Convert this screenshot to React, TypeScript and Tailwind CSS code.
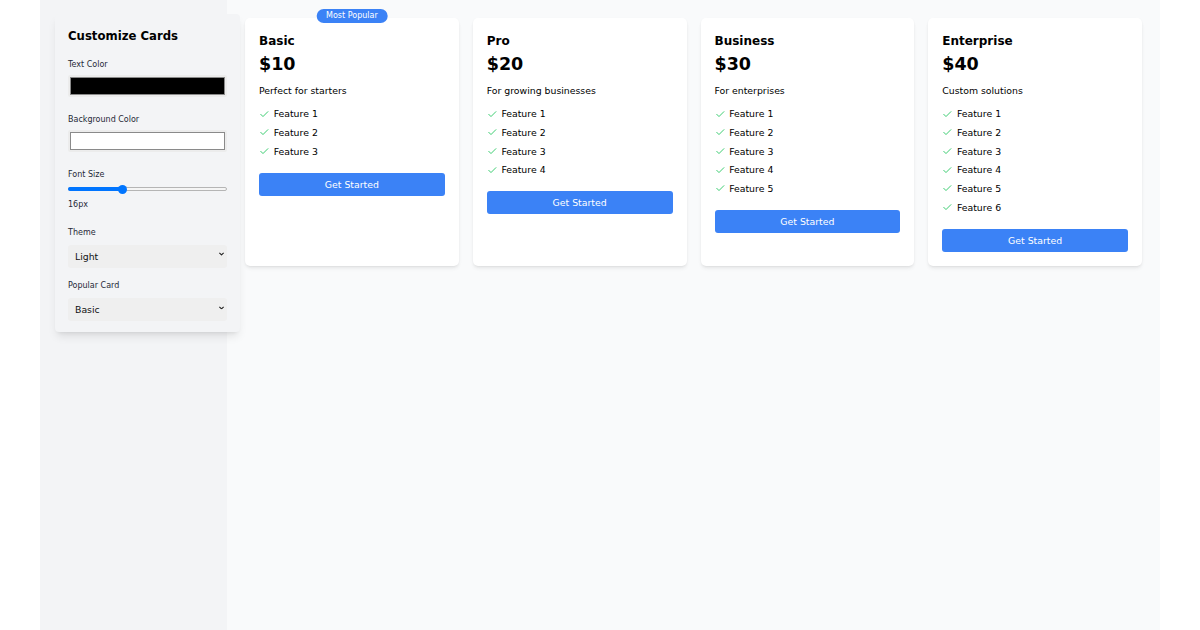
import React, { useState } from "react";

type Plan = { name: string; price: string; desc: string; features: number };

const plans: Plan[] = [
  { name: "Basic", price: "$10", desc: "Perfect for starters", features: 3 },
  { name: "Pro", price: "$20", desc: "For growing businesses", features: 4 },
  { name: "Business", price: "$30", desc: "For enterprises", features: 5 },
  { name: "Enterprise", price: "$40", desc: "Custom solutions", features: 6 },
];

function Check() {
  return (
    <svg
      viewBox="0 0 24 24"
      className="w-[10.67px] h-[10.67px] shrink-0 text-[#22c55e]"
      fill="none"
      stroke="currentColor"
      strokeWidth={2}
      strokeLinecap="round"
      strokeLinejoin="round"
    >
      <path d="M20 6 9 17l-5-5" />
    </svg>
  );
}

function Chevron() {
  return (
    <svg
      viewBox="0 0 8 5"
      className="pointer-events-none absolute right-[3px] top-1/2 -translate-y-1/2 w-[5px] h-[3.5px] text-[#222]"
      fill="none"
      stroke="currentColor"
      strokeWidth={1.8}
      strokeLinecap="round"
      strokeLinejoin="round"
    >
      <path d="M1 1l3 3 3-3" />
    </svg>
  );
}

function Label({ children }: { children: React.ReactNode }) {
  return (
    <div className="h-[11px] leading-[11px] text-[8px] text-[#1f2937]">{children}</div>
  );
}

function ColorBox({ color }: { color: string }) {
  return (
    <div className="h-[22px] w-full rounded-[2px] bg-[#ececec] p-[2px]">
      <div
        className="h-full w-full border border-[#8a8a8a]"
        style={{ backgroundColor: color }}
      />
    </div>
  );
}

function Select({ value, options }: { value: string; options: string[] }) {
  return (
    <div className="relative h-[23px] w-full">
      <select
        defaultValue={value}
        className="h-full w-full appearance-none rounded-[3px] bg-[#efefef] pl-[7px] text-[9.33px] leading-[23px] text-[#111] outline-none"
      >
        {options.map((o) => (
          <option key={o}>{o}</option>
        ))}
      </select>
      <Chevron />
    </div>
  );
}

function Slider({ min, max, value }: { min: number; max: number; value: number }) {
  const frac = (value - min) / (max - min);
  const thumbLeft = frac * (159 - 9);
  return (
    <div className="relative h-[9px] w-full">
      <div className="absolute left-0 right-0 top-1/2 h-[4px] -translate-y-1/2 rounded-full border border-[#b5b5b5] bg-[#f5f5f5]" />
      <div
        className="absolute left-0 top-1/2 h-[4px] -translate-y-1/2 rounded-full bg-[#0075ff]"
        style={{ width: thumbLeft + 4.5 }}
      />
      <div
        className="absolute top-0 h-[9px] w-[9px] rounded-full bg-[#0075ff]"
        style={{ left: thumbLeft }}
      />
    </div>
  );
}

function Card({ plan, popular }: { plan: Plan; popular: boolean }) {
  return (
    <div className="relative rounded-[5px] bg-white px-[14px] pt-[13.5px] pb-[14px] shadow-[0_3px_4px_-1px_rgba(0,0,0,0.08),0_1px_3px_-1px_rgba(0,0,0,0.1)]">
      {popular && (
        <div className="absolute left-1/2 top-[-9px] h-[14px] -translate-x-1/2 rounded-full bg-[#3b82f6] px-[9.5px] text-[8px] leading-[14px] whitespace-nowrap text-white">
          Most Popular
        </div>
      )}
      <div className="h-[18.5px] text-[12px] leading-[18.5px] font-bold text-black">{plan.name}</div>
      <div className="mt-[4px] h-[20px] text-[17.5px] leading-[20px] font-bold text-black">{plan.price}</div>
      <div className="mt-[10.4px] text-[9.33px] leading-[13.33px] text-black">{plan.desc}</div>
      <ul className="mt-[9.7px] flex flex-col gap-[5.33px]">
        {Array.from({ length: plan.features }).map((_, i) => (
          <li key={i} className="flex items-center gap-[4px] text-[9.33px] leading-[13.33px] text-black">
            <Check />
            <span>Feature {i + 1}</span>
          </li>
        ))}
      </ul>
      <button className="mt-[14.7px] h-[23px] w-full rounded-[3px] bg-[#3b82f6] text-[9.33px] leading-[23px] text-white">
        Get Started
      </button>
    </div>
  );
}

export default function App() {
  const [popular] = useState("Basic");
  return (
    <div className="min-h-screen bg-white font-['DejaVu_Sans',sans-serif]">
      <div className="mx-auto flex min-h-screen w-[1120px]">
        <aside className="w-[187px] shrink-0 bg-[#f3f4f6]">
          <div className="relative z-10 mt-[14px] ml-[15px] w-[185px] rounded-[4px] bg-[#f3f4f6] px-[13px] pt-[12.5px] pb-[13px] shadow-[0_6px_10px_-2px_rgba(0,0,0,0.1),0_3px_4px_-3px_rgba(0,0,0,0.1)]">
            <h2 className="h-[19px] text-[11.7px] leading-[19px] font-bold text-black">Customize Cards</h2>
            <div className="mt-[13.5px]">
              <Label>Text Color</Label>
              <div className="mt-[5px]">
                <ColorBox color="#000000" />
              </div>
            </div>
            <div className="mt-[17px]">
              <Label>Background Color</Label>
              <div className="mt-[5px]">
                <ColorBox color="#ffffff" />
              </div>
            </div>
            <div className="mt-[17px]">
              <Label>Font Size</Label>
              <div className="mt-[4.5px]">
                <Slider min={12} max={24} value={16} />
              </div>
              <div className="mt-[5.5px] h-[11px] text-[8px] leading-[11px] text-[#1f2937]">16px</div>
            </div>
            <div className="mt-[16.5px]">
              <Label>Theme</Label>
              <div className="mt-[5px]">
                <Select value="Light" options={["Light", "Dark"]} />
              </div>
            </div>
            <div className="mt-[14.5px]">
              <Label>Popular Card</Label>
              <div className="mt-[5px]">
                <Select value="Basic" options={["Basic", "Pro", "Business", "Enterprise"]} />
              </div>
            </div>
          </div>
        </aside>
        <main className="flex-1 bg-[#f9fafb] px-[18px] pt-[18px]">
          <div className="grid grid-cols-4 gap-[14px]">
            {plans.map((p) => (
              <Card key={p.name} plan={p} popular={p.name === popular} />
            ))}
          </div>
        </main>
      </div>
    </div>
  );
}
